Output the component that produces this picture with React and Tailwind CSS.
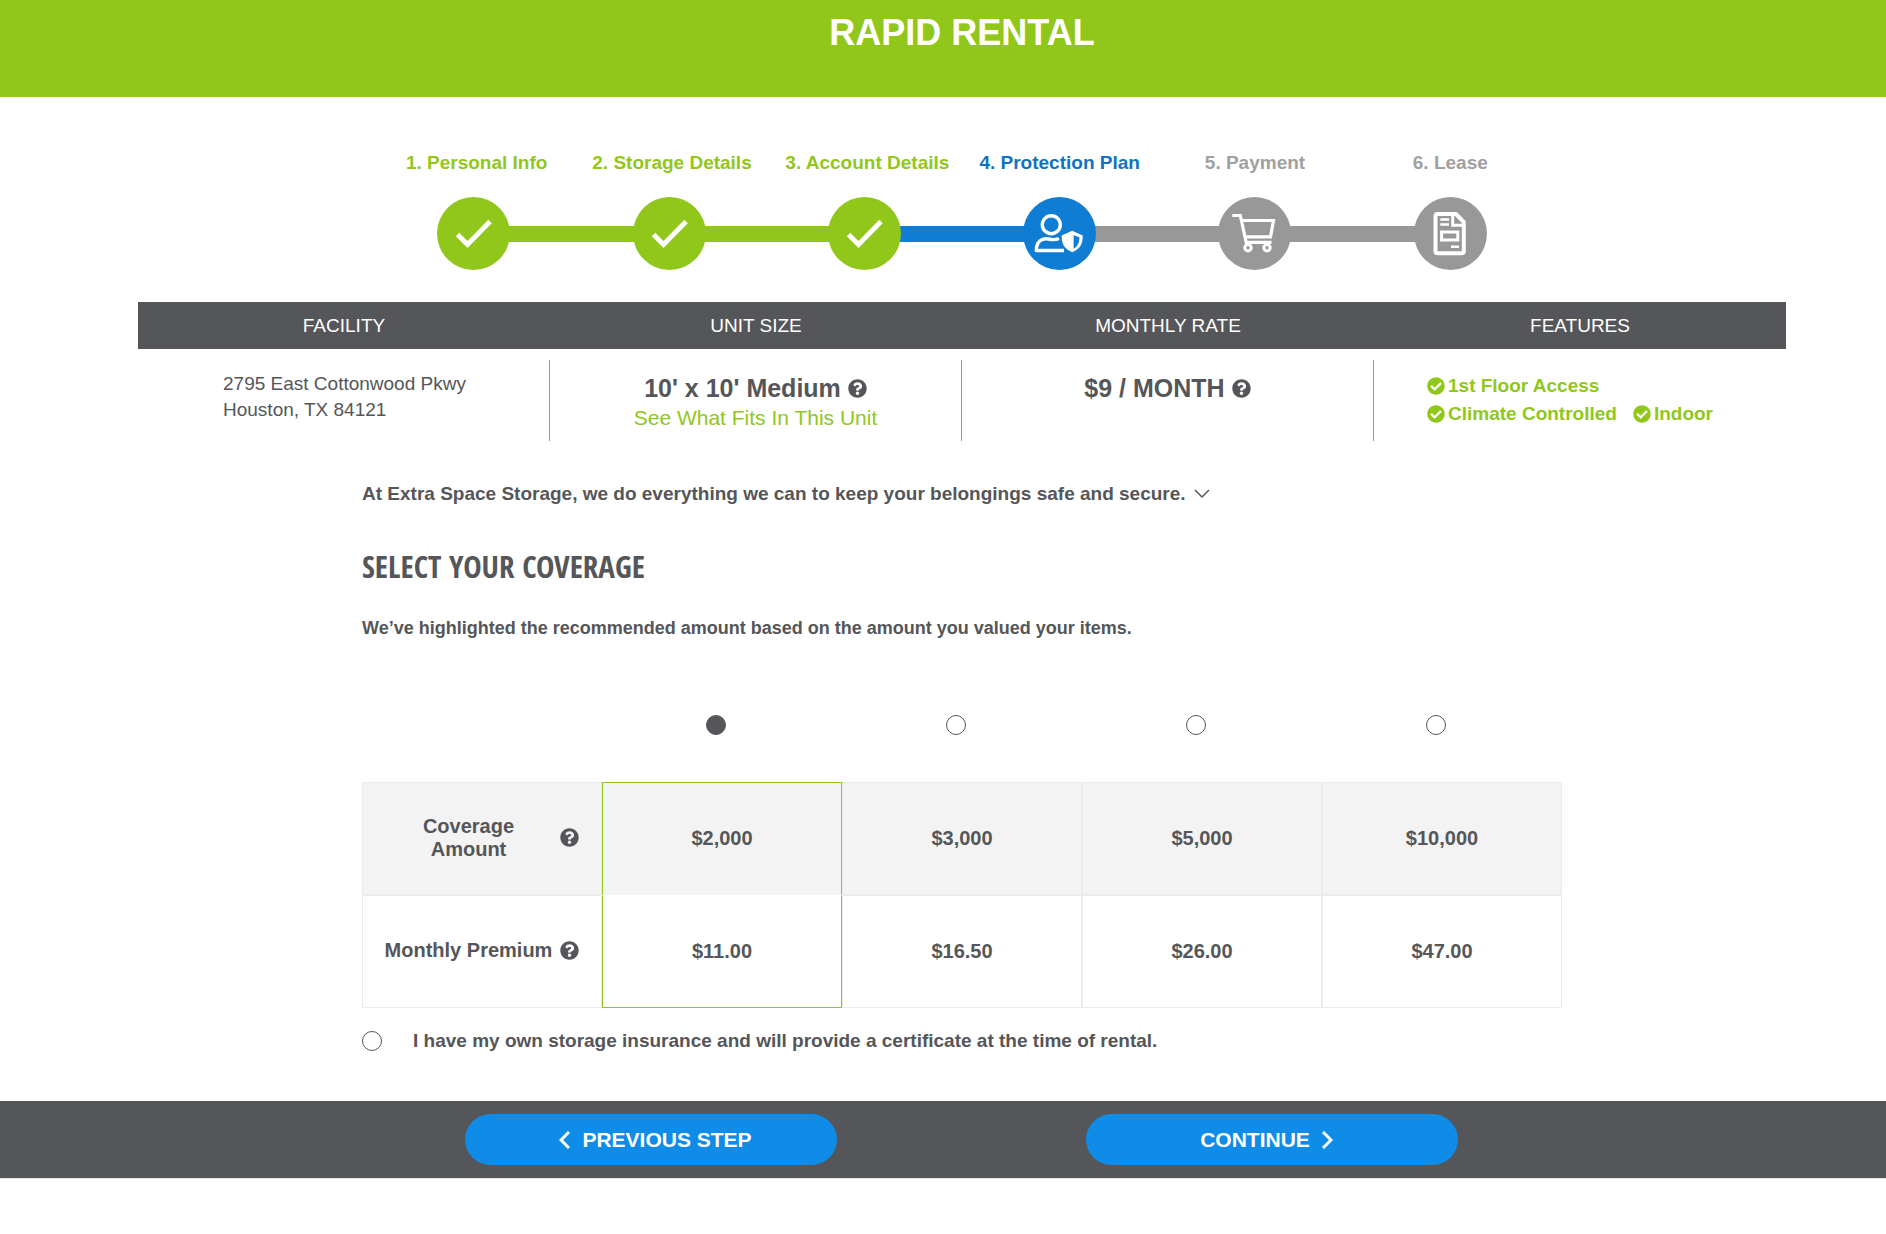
import React, { useState } from 'react';
import { FaCheckCircle, FaQuestionCircle } from 'react-icons/fa';

const steps = [
  { label: '1. Personal Info', status: 'done', icon: 'check' },
  { label: '2. Storage Details', status: 'done', icon: 'check' },
  { label: '3. Account Details', status: 'done', icon: 'check' },
  { label: '4. Protection Plan', status: 'current', icon: 'protection' },
  { label: '5. Payment', status: 'todo', icon: 'cart' },
  { label: '6. Lease', status: 'todo', icon: 'lease' },
];

const plans = [
  { id: 'p1', amount: '$2,000', premium: '$11.00' },
  { id: 'p2', amount: '$3,000', premium: '$16.50' },
  { id: 'p3', amount: '$5,000', premium: '$26.00' },
  { id: 'p4', amount: '$10,000', premium: '$47.00' },
];

const textColors = {
  done: 'text-[#91c71a] pl-1.5',
  current: 'text-[#0f72c4]',
  todo: 'text-[#a0a0a0]',
};

const fillColors = {
  done: 'bg-[#91c71a]',
  current: 'bg-[#0f7dd4]',
  todo: 'bg-[#989898]',
};

const radioClass =
  'appearance-none w-5 h-5 shrink-0 rounded-full border border-[#555659] bg-white checked:bg-[#555659] cursor-pointer';

function StepIcon({ name }) {
  return (
    <svg className="w-full h-full text-white" viewBox="0 0 73 73" fill="none" stroke="currentColor" strokeWidth="3.4" aria-hidden="true">
      {name === 'check' && <path d="M20.500 37.500l10 10L53 24.500" strokeWidth="4.800" />}
      {name === 'protection' && (
        <>
          <circle cx="28.300" cy="27.700" r="9" />
          <path d="M36 41.500c-4 1.800-7 1.400-10.500.5C18.500 40.500 13.300 45 13.300 53.500H41" strokeLinejoin="round" />
          <path
            d="M49.200 33.700l10.500 4.800C60 46 57.500 52 49.200 55.200 40.900 52 38.400 46 38.700 38.500z"
            fill="currentColor"
            stroke="none"
          />
          <path d="M50.600 38l5.900 2.600c-.1 4.900-1.900 8.900-5.900 11.300z" fill="#0f7dd4" stroke="none" />
        </>
      )}
      {name === 'cart' && (
        <>
          <path d="M14.300 18.500h8l6.700 30.500M24 23.500h31.500L52.500 39.800H27.500M28.500 45.300h25" strokeWidth="3.200" />
          <circle cx="30" cy="50.700" r="3.200" fill="#989898" strokeWidth="3" />
          <circle cx="49" cy="50.700" r="3.200" fill="#989898" strokeWidth="3" />
        </>
      )}
      {name === 'lease' && (
        <>
          <path d="M23.500 17H42l7.800 8v29.200q0 2-2 2H23.500q-2 0-2-2V19q0-2 2-2z" strokeWidth="4" />
          <path d="M38.700 17v11.200H50" strokeWidth="3" />
          <path d="M26.300 22.500H35M26.300 27.500H35M37 49.700h8" strokeWidth="2.500" />
          <path d="M27.600 35h16.200v8H27.600z" strokeWidth="3" />
        </>
      )}
    </svg>
  );
}

function HelpButton({ label }) {
  return (
    <button type="button" aria-label={label} className="shrink-0 cursor-pointer text-[#555659]">
      <FaQuestionCircle className="w-[19px] h-[19px]" />
    </button>
  );
}

function Stepper() {
  return (
    <ol className="flex w-full max-w-[1172px] mx-auto">
      {steps.map((step, i) => (
        <li key={step.label} className="flex-1 flex flex-col items-center">
          <span className={`text-[19px] leading-6 font-bold whitespace-nowrap ${textColors[step.status]}`}>{step.label}</span>
          <div className="mt-[22px] w-full flex items-center">
            <div className={`flex-1 h-4 -mr-1 ${i === 0 ? '' : fillColors[step.status]}`} />
            <div className={`relative z-10 w-[73px] h-[73px] rounded-full ${fillColors[step.status]}`}>
              <StepIcon name={step.icon} />
            </div>
            <div
              className={`flex-1 h-4 -ml-1 ${i === steps.length - 1 ? '' : fillColors[steps[i + 1].status]}`}
            />
          </div>
        </li>
      ))}
    </ol>
  );
}

function Feature({ children }) {
  return (
    <li className="flex items-center gap-[3px]">
      <FaCheckCircle className="w-[18px] h-[18px] shrink-0" />
      {children}
    </li>
  );
}

function UnitSummary() {
  return (
    <section className="mt-8">
      <div className="grid grid-cols-4 bg-[#555659] text-white text-[19px] leading-[47px] text-center">
        <h2>FACILITY</h2>
        <h2>UNIT SIZE</h2>
        <h2>MONTHLY RATE</h2>
        <h2>FEATURES</h2>
      </div>
      <div className="grid grid-cols-4 mt-[11px] min-h-[81px] divide-x divide-[#97989a]">
        <address className="not-italic pl-[85px] pt-[11px] text-[19px] leading-[26px]">
          2795 East Cottonwood Pkwy
          <br />
          Houston, TX 84121
        </address>
        <div className="pt-[13px] flex flex-col items-center">
          <div className="flex items-center gap-[7px] text-[25px] leading-[30px] font-bold">
            10' x 10' Medium
            <HelpButton label="About this unit size" />
          </div>
          <a href="#fits" className="text-[21px] leading-[30px] text-[#91c71a]">See What Fits In This Unit</a>
        </div>
        <div className="pt-[13px] flex flex-col items-center">
          <div className="flex items-center gap-[7px] text-[25px] leading-[30px] font-bold">
            $9 / MONTH
            <HelpButton label="About the monthly rate" />
          </div>
        </div>
        <ul className="pl-[53px] pt-3 flex flex-wrap content-start gap-x-4 text-[19px] leading-7 font-bold text-[#91c71a]">
          <Feature>1st Floor Access</Feature>
          <li className="w-full" aria-hidden="true" />
          <Feature>Climate Controlled</Feature>
          <Feature>Indoor</Feature>
        </ul>
      </div>
    </section>
  );
}

function CoverageTable({ selected, onSelect }) {
  const amountBorder = (id) =>
    id === selected ? 'border-x-[#91c71a] border-t-[#91c71a] border-b-transparent' : 'border-[#ebebeb]';
  const premiumBorder = (id) =>
    id === selected ? 'border-x-[#91c71a] border-b-[#91c71a] border-t-transparent' : 'border-[#ebebeb]';

  return (
    <table className="mt-7 w-full table-fixed border-separate border-spacing-0 text-[20px] leading-[23px] font-bold text-center">
      <thead>
        <tr className="h-[114px]">
          <td />
          {plans.map((plan) => (
            <th key={plan.id} scope="col" className="pr-3 pb-0.5">
              <input
                type="radio"
                name="coverage"
                aria-label={`${plan.amount} coverage`}
                checked={selected === plan.id}
                onChange={() => onSelect(plan.id)}
                className={`${radioClass} align-middle`}
              />
            </th>
          ))}
        </tr>
      </thead>
      <tbody>
        <tr className="h-[113px] bg-[#f3f3f3]">
          <th scope="row" className="border border-[#ebebeb] pl-5 pr-[22px] pb-0.5">
            <div className="flex items-center gap-1.5">
              <span className="flex-1">Coverage<br />Amount</span>
              <HelpButton label="About the coverage amount" />
            </div>
          </th>
          {plans.map((plan) => (
            <td key={plan.id} className={`border ${amountBorder(plan.id)}`}>{plan.amount}</td>
          ))}
        </tr>
        <tr className="h-[113px]">
          <th scope="row" className="border border-[#ebebeb] pl-5 pr-[22px] pb-0.5">
            <div className="flex items-center gap-1.5">
              <span className="flex-1">Monthly Premium</span>
              <HelpButton label="About the monthly premium" />
            </div>
          </th>
          {plans.map((plan) => (
            <td key={plan.id} className={`border ${premiumBorder(plan.id)}`}>{plan.premium}</td>
          ))}
        </tr>
      </tbody>
    </table>
  );
}

function App() {
  const [selected, setSelected] = useState('p1');

  return (
    <div className="min-h-screen bg-white text-[#555659] font-['Liberation_Sans',Arial,sans-serif]">
      <header className="bg-[#91c71a] pl-[38px] pt-[13px] pb-11">
        <h1 className="text-white text-center text-[36px] leading-10 font-bold">RAPID RENTAL</h1>
      </header>

      <main className="pl-[138px] pr-[100px] pt-[54px] pb-12">
        <Stepper />
        <UnitSummary />

        {/* Coverage */}
        <section className="w-full max-w-[1200px] mx-auto mt-[41px]">
          <button type="button" className="flex items-center gap-2 text-[19px] leading-6 font-bold cursor-pointer">
            At Extra Space Storage, we do everything we can to keep your belongings safe and secure.
            <svg className="w-4 h-[10px]" viewBox="0 0 16 10" fill="none" stroke="currentColor" strokeWidth="1.5" aria-hidden="true">
              <path d="M1 1l7 7 7-7" />
            </svg>
          </button>
          <h2 className="mt-[42px] text-[31px] leading-9 font-bold font-['Open_Sans_Condensed','Roboto_Condensed',sans-serif]">
            SELECT YOUR COVERAGE
          </h2>
          <p className="mt-8 text-[18px] leading-6 font-bold">
            We’ve highlighted the recommended amount based on the amount you valued your items.
          </p>

          <CoverageTable selected={selected} onSelect={setSelected} />

          <label className="mt-[21px] flex items-center gap-[31px] text-[19px] leading-6 font-bold cursor-pointer">
            <input
              type="radio"
              name="coverage"
              checked={selected === 'own'}
              onChange={() => setSelected('own')}
              className={radioClass}
            />
            I have my own storage insurance and will provide a certificate at the time of rental.
          </label>
        </section>
      </main>

      <footer className="bg-[#555659] pl-9 py-[13px] border-b border-[#e8e8e8]">
        <div className="w-full max-w-[993px] mx-auto flex justify-between text-white text-[21px] leading-[51px] font-bold">
          <button type="button" className="w-[372px] pl-2.5 rounded-full bg-[#0f8be8] flex items-center justify-center gap-3 cursor-pointer">
            <svg className="w-[11px] h-[18px]" viewBox="0 0 11 18" fill="none" stroke="currentColor" strokeWidth="3" aria-hidden="true">
              <path d="M10 1L2 9l8 8" />
            </svg>
            PREVIOUS STEP
          </button>
          <button type="button" className="w-[372px] pr-2.5 rounded-full bg-[#0f8be8] flex items-center justify-center gap-3 cursor-pointer">
            CONTINUE
            <svg className="w-[11px] h-[18px]" viewBox="0 0 11 18" fill="none" stroke="currentColor" strokeWidth="3" aria-hidden="true">
              <path d="M1 1l8 8-8 8" />
            </svg>
          </button>
        </div>
      </footer>
    </div>
  );
}

export default App;
